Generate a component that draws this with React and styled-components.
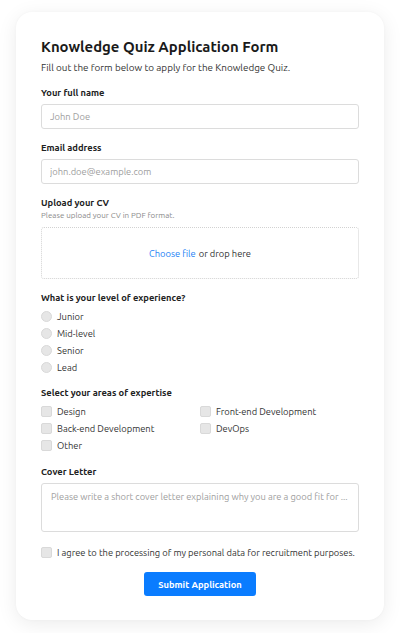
import React from "react";
import styled, { createGlobalStyle } from "styled-components";

const Global = createGlobalStyle`
  html, body { margin: 0; padding: 0; background: #ffffff; }
  body {
    font-family: Ubuntu, Lato, "Noto Sans", sans-serif;
    color: #222;
    -webkit-font-smoothing: antialiased;
  }
  * { box-sizing: border-box; }
`;

const Page = styled.div`
  padding: 12px 16px 13px;
`;

const Card = styled.form`
  background: #fff;
  border-radius: 16px;
  box-shadow: 0 4px 20px rgba(0, 0, 0, 0.08), 0 0 3px rgba(0, 0, 0, 0.03);
  padding: 25px 25px 24px;
  display: flex;
  flex-direction: column;
`;

const Title = styled.h1`
  margin: 0;
  font-size: 14.9px;
  line-height: 20px;
  font-weight: 700;
  color: #1a1a1a;
`;

const Subtitle = styled.p`
  margin: 4px 0 0;
  font-size: 9.9px;
  line-height: 14px;
  color: #333;
`;

const Label = styled.label`
  display: block;
  margin-top: ${(p) => p.$mt ?? 13}px;
  font-size: 9.33px;
  line-height: 12px;
  font-weight: 700;
  color: #222;
`;

const Help = styled.div`
  margin-top: 1px;
  font-size: 8px;
  line-height: 11px;
  color: #8a8a8a;
`;

const TextInput = styled.input`
  margin-top: 5px;
  width: 100%;
  height: 25px;
  border: 1px solid #dcdcdc;
  border-radius: 3px;
  padding: 0 8px;
  font-family: inherit;
  font-size: 9.33px;
  color: #333;
  outline: none;
  &::placeholder { color: #9e9e9e; }
`;

const Drop = styled.div`
  margin-top: 6px;
  height: 52px;
  border: 1px dotted #d2d2d2;
  border-radius: 3px;
  display: flex;
  align-items: center;
  justify-content: center;
  font-size: 9.33px;
  color: #333;
`;

const Link = styled.span`
  color: #1a7ff5;
  margin-right: 3px;
`;

const OptionList = styled.div`
  margin-top: 4px;
  display: grid;
  grid-template-columns: ${(p) => (p.$cols === 2 ? "1fr 1fr" : "1fr")};
`;

const Option = styled.label`
  display: flex;
  align-items: center;
  gap: 5px;
  height: 17px;
  font-size: 9.33px;
  color: #333;
`;

const Mark = styled.input`
  appearance: none;
  -webkit-appearance: none;
  margin: 0;
  width: 11px;
  height: 11px;
  flex: none;
  background: #e6e6e6;
  border: 1px solid #d9d9d9;
  border-radius: ${(p) => (p.type === "radio" ? "50%" : "2px")};
`;

const TextArea = styled.textarea`
  margin-top: 5px;
  width: 100%;
  height: 49px;
  border: 1px solid #dcdcdc;
  border-radius: 3px;
  padding: 7px 9px;
  font-family: inherit;
  font-size: 9.33px;
  line-height: 12px;
  resize: none;
  outline: none;
  &::placeholder { color: #9e9e9e; }
`;

const Agree = styled(Option)`
  margin-top: 12px;
`;

const ButtonRow = styled.div`
  margin-top: 11px;
  display: flex;
  justify-content: center;
`;

const Submit = styled.button`
  width: 112px;
  height: 24px;
  border: none;
  border-radius: 3px;
  background: #0a7cff;
  color: #fff;
  font-family: inherit;
  font-size: 9.33px;
  font-weight: 700;
  cursor: pointer;
`;

const levels = ["Junior", "Mid-level", "Senior", "Lead"];
const areas = ["Design", "Front-end Development", "Back-end Development", "DevOps", "Other"];

export default function App() {
  return (
    <>
      <Global />
      <Page>
        <Card onSubmit={(e) => e.preventDefault()}>
          <Title>Knowledge Quiz Application Form</Title>
          <Subtitle>Fill out the form below to apply for the Knowledge Quiz.</Subtitle>

          <Label $mt={12} htmlFor="name">Your full name</Label>
          <TextInput id="name" placeholder="John Doe" />

          <Label htmlFor="email">Email address</Label>
          <TextInput id="email" type="email" placeholder="john.doe@example.com" />

          <Label>Upload your CV</Label>
          <Help>Please upload your CV in PDF format.</Help>
          <Drop>
            <Link>Choose file</Link> or drop here
          </Drop>

          <Label>What is your level of experience?</Label>
          <OptionList>
            {levels.map((l) => (
              <Option key={l}>
                <Mark type="radio" name="level" />
                {l}
              </Option>
            ))}
          </OptionList>

          <Label $mt={11}>Select your areas of expertise</Label>
          <OptionList $cols={2}>
            {areas.map((a) => (
              <Option key={a}>
                <Mark type="checkbox" />
                {a}
              </Option>
            ))}
          </OptionList>

          <Label $mt={12} htmlFor="cover">Cover Letter</Label>
          <TextArea
            id="cover"
            placeholder="Please write a short cover letter explaining why you are a good fit for ..."
          />

          <Agree>
            <Mark type="checkbox" />
            I agree to the processing of my personal data for recruitment purposes.
          </Agree>

          <ButtonRow>
            <Submit type="submit">Submit Application</Submit>
          </ButtonRow>
        </Card>
      </Page>
    </>
  );
}
